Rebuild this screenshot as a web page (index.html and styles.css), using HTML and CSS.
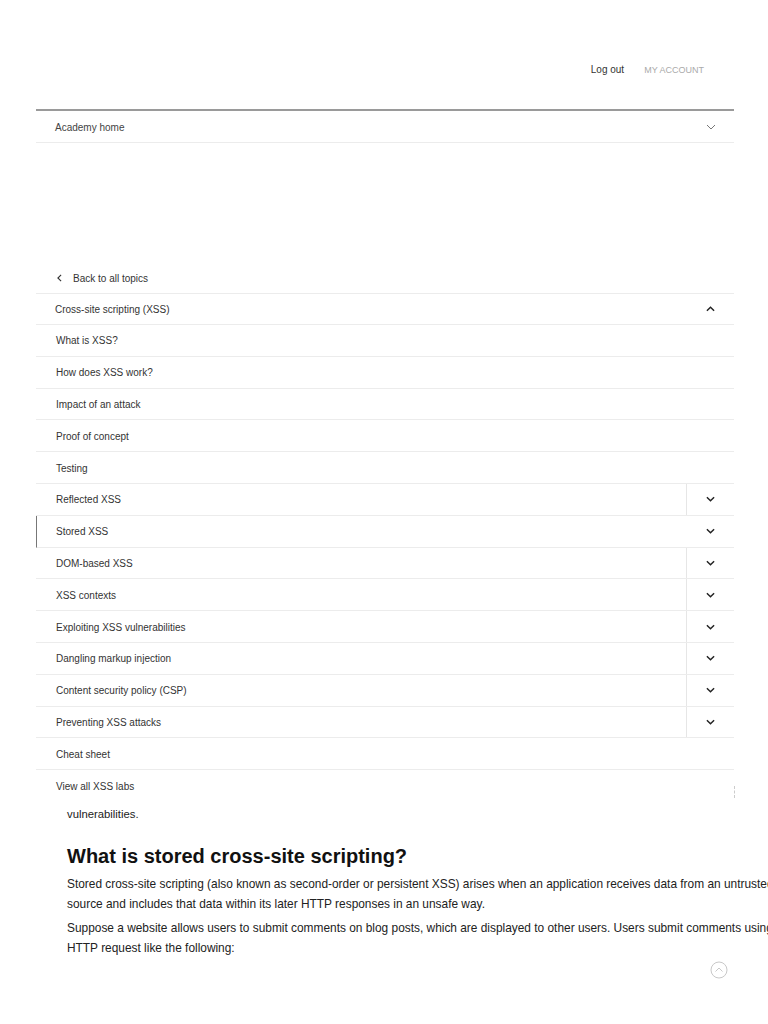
FILE: index.html
```html
<!DOCTYPE html>
<html>
<head>
<meta charset="utf-8">
<link rel="stylesheet" href="styles.css">
</head>
<body>
<div class="page">
  <header class="top">
    <a class="logout">Log out</a>
    <a class="account">MY ACCOUNT</a>
  </header>
  <nav class="home-nav">
    <div class="row home-row">
      <span class="label">Academy home</span>
      <span class="chev-cell"><svg class="chev thin" viewBox="0 0 10 6"><path d="M1 1 L5 5 L9 1"/></svg></span>
    </div>
  </nav>
  <nav class="topic-nav">
    <div class="row back-row">
      <svg class="back-chev" viewBox="0 0 6 10"><path d="M5 1 L1 5 L5 9"/></svg>
      <span class="label">Back to all topics</span>
    </div>
    <div class="row section-row">
      <span class="label">Cross-site scripting (XSS)</span>
      <span class="chev-cell"><svg class="chev" viewBox="0 0 10 6"><path d="M1 5 L5 1 L9 5"/></svg></span>
    </div>
    <div class="row item"><span class="label">What is XSS?</span></div>
    <div class="row item"><span class="label">How does XSS work?</span></div>
    <div class="row item"><span class="label">Impact of an attack</span></div>
    <div class="row item"><span class="label">Proof of concept</span></div>
    <div class="row item"><span class="label">Testing</span></div>
    <div class="row item"><span class="label">Reflected XSS</span><span class="chev-cell split"><svg class="chev" viewBox="0 0 10 6"><path d="M1 1 L5 5 L9 1"/></svg></span></div>
    <div class="row item active"><span class="label">Stored XSS</span><span class="chev-cell"><svg class="chev" viewBox="0 0 10 6"><path d="M1 1 L5 5 L9 1"/></svg></span></div>
    <div class="row item"><span class="label">DOM-based XSS</span><span class="chev-cell split"><svg class="chev" viewBox="0 0 10 6"><path d="M1 1 L5 5 L9 1"/></svg></span></div>
    <div class="row item"><span class="label">XSS contexts</span><span class="chev-cell split"><svg class="chev" viewBox="0 0 10 6"><path d="M1 1 L5 5 L9 1"/></svg></span></div>
    <div class="row item"><span class="label">Exploiting XSS vulnerabilities</span><span class="chev-cell split"><svg class="chev" viewBox="0 0 10 6"><path d="M1 1 L5 5 L9 1"/></svg></span></div>
    <div class="row item"><span class="label">Dangling markup injection</span><span class="chev-cell split"><svg class="chev" viewBox="0 0 10 6"><path d="M1 1 L5 5 L9 1"/></svg></span></div>
    <div class="row item"><span class="label">Content security policy (CSP)</span><span class="chev-cell split"><svg class="chev" viewBox="0 0 10 6"><path d="M1 1 L5 5 L9 1"/></svg></span></div>
    <div class="row item"><span class="label">Preventing XSS attacks</span><span class="chev-cell split"><svg class="chev" viewBox="0 0 10 6"><path d="M1 1 L5 5 L9 1"/></svg></span></div>
    <div class="row item"><span class="label">Cheat sheet</span></div>
    <div class="row item last"><span class="label">View all XSS labs</span><span class="scroll-mark"></span></div>
  </nav>
  <main class="content">
    <p class="tail">vulnerabilities.</p>
    <h2>What is stored cross-site scripting?</h2>
    <p>Stored cross-site scripting (also known as second-order or persistent XSS) arises when an application receives data from an untrusted source and includes that data within its later HTTP responses in an unsafe way.</p>
    <p>Suppose a website allows users to submit comments on blog posts, which are displayed to other users. Users submit comments using an HTTP request like the following:</p>
  </main>
  <a class="to-top"><svg viewBox="0 0 18 18"><circle cx="9" cy="9" r="8"/><path d="M5.5 10.5 L9 7 L12.5 10.5"/></svg></a>
</div>
</body>
</html>
```
FILE: styles.css
```css
html, body {
  margin: 0;
  padding: 0;
  background: #fff;
}
body {
  width: 768px;
  height: 1024px;
  overflow: hidden;
  font-family: "Liberation Sans", Arial, sans-serif;
  color: #333;
}
.page {
  position: relative;
  width: 768px;
  height: 1024px;
  overflow: hidden;
}
.top {
  height: 109px;
  box-sizing: border-box;
  display: flex;
  justify-content: flex-end;
  align-items: flex-start;
  gap: 20px;
  padding: 63px 64px 0 0;
}
.logout {
  font-size: 10px;
  color: #333;
  margin-top: 1px;
}
.account {
  font-size: 9px;
  color: #aaa;
  margin-top: 2px;
}
.home-nav {
  margin: 0 34px 0 36px;
  border-top: 2px solid #9a9a9a;
}
.topic-nav {
  margin: 119px 34px 0 36px;
}
.row {
  display: flex;
  align-items: stretch;
  height: 31.8px;
  box-sizing: border-box;
  border-bottom: 1px solid #ececec;
  font-size: 10px;
  color: #333;
}
.row .label {
  flex: 1;
  display: flex;
  align-items: center;
  padding-left: 19px;
  padding-top: 1px;
}
.home-row {
  height: 32px;
  color: #444;
}
.back-row {
  height: 32px;
  align-items: center;
  padding-left: 21px;
}
.back-row .label {
  padding-left: 11px;
  flex: 0 0 auto;
}
.back-chev {
  width: 5px;
  height: 8px;
  fill: none;
  stroke: #333;
  stroke-width: 1.4;
}
.section-row {
  height: 31px;
  background: #fff;
}
.item .label {
  padding-left: 20px;
}
.chev-cell {
  width: 47px;
  display: flex;
  align-items: center;
  justify-content: center;
}
.chev-cell.split {
  border-left: 1px solid #e6e6e6;
}
.chev {
  width: 9px;
  height: 6px;
  fill: none;
  stroke: #222;
  stroke-width: 1.6;
}
.chev.thin {
  stroke: #777;
  stroke-width: 1;
  width: 10px;
}
.item.active {
  border-left: 1px solid #777;
}
.item.active .label {
  padding-left: 19px;
}
.item.last {
  border-bottom: none;
  position: relative;
}
.scroll-mark {
  position: absolute;
  right: -1px;
  top: 16px;
  height: 12px;
  border-right: 1px dashed #ccc;
}
.content {
  padding-left: 67px;
  width: 728px;
  font-size: 11.9px;
  color: #222;
}
.content p {
  margin: 0 0 4px 0;
  line-height: 20px;
}
.content .tail {
  margin: 2px 0 0 0;
  line-height: 20px;
  font-size: 11.3px;
}
.content h2 {
  font-size: 20px;
  font-weight: bold;
  color: #111;
  margin: 19px 0 5px 0;
  line-height: 26px;
}
.to-top {
  position: absolute;
  left: 710px;
  top: 961px;
  width: 18px;
  height: 18px;
}
.to-top svg {
  width: 18px;
  height: 18px;
  fill: none;
  stroke: #c8c8c8;
  stroke-width: 1;
}
```
